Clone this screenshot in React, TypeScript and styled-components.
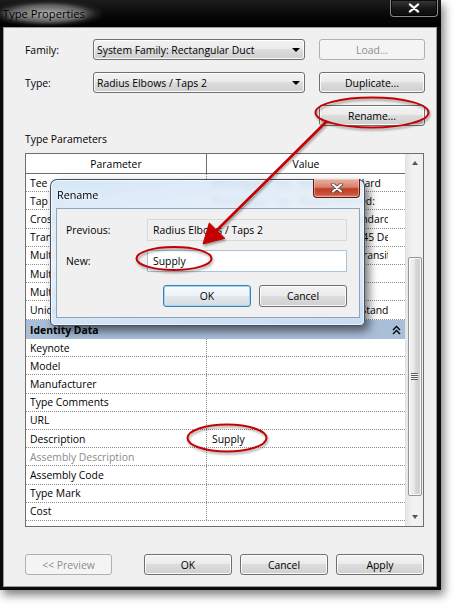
import React from "react";
import styled, { createGlobalStyle, css } from "styled-components";

const FONT = `"Open Sans", "Noto Sans", "Liberation Sans", sans-serif`;

const GlobalStyle = createGlobalStyle`
  html, body { margin: 0; padding: 0; background: #ffffff; }
  body { font-family: ${FONT}; font-size: 10.4px; color: #000; }
  * { box-sizing: border-box; }
`;

const Page = styled.div`
  position: relative;
  width: 457px;
  height: 611px;
  overflow: hidden;
  background: #fff;
`;

const Window = styled.div`
  width: 441px;
  height: 590px;
  display: flex;
  flex-direction: column;
  background: #0a0a0a;
  box-shadow: 3px 5px 9px rgba(0, 0, 0, 0.5);
`;

const TitleBar = styled.div`
  height: 27px;
  flex: none;
  display: flex;
  justify-content: space-between;
  background: linear-gradient(#1c1c1c, #070707 60%, #000);
`;

const TitleText = styled.span`
  align-self: center;
  margin-left: -6px;
  margin-top: -1px;
  padding: 5px 16px 5px 9px;
  font-size: 11.2px;
  color: #000;
  background: radial-gradient(ellipse at center, rgba(175, 175, 175, 0.95) 0%, rgba(125, 125, 125, 0.75) 45%, rgba(60, 60, 60, 0.3) 65%, rgba(0, 0, 0, 0) 78%);
  text-shadow: 0 0 4px rgba(255, 255, 255, 0.45);
`;

const MainClose = styled.div`
  width: 48px;
  height: 17px;
  margin-right: 3px;
  border: 1px solid #8a8a8a;
  border-top: none;
  border-radius: 0 0 4px 4px;
  background: linear-gradient(#3a3a3a, #161616 55%, #0c0c0c);
  box-shadow: inset 0 0 0 1px rgba(0, 0, 0, 0.8);
  display: flex;
  align-items: center;
  justify-content: center;
`;

const Body = styled.div`
  flex: 1;
  margin: 0 4px 3px 3px;
  background: #f0f0f0;
  border: 1px solid #9a9a9a;
  padding: 11px 11px 0 21px;
  display: flex;
  flex-direction: column;
`;

const TopGrid = styled.div`
  display: grid;
  grid-template-columns: 54px 212px 1fr;
  grid-auto-rows: 21px;
  column-gap: 14px;
  row-gap: 12px;
  margin-bottom: 5px;
`;

const Label = styled.span`
  display: flex;
  align-items: center;
`;

const winButton = css`
  border: 1px solid #707070;
  border-radius: 3px;
  background: linear-gradient(#f2f2f2 0%, #ebebeb 49%, #dddddd 50%, #cfcfcf 100%);
  box-shadow: inset 0 0 0 1px rgba(255, 255, 255, 0.85);
`;

const Combo = styled.div`
  ${winButton};
  display: flex;
  align-items: center;
  justify-content: space-between;
  padding: 0 4px 0 3px;
`;

const ComboArrow = styled.span`
  width: 0;
  height: 0;
  border-left: 4px solid transparent;
  border-right: 4px solid transparent;
  border-top: 4px solid #000;
`;

const Button = styled.div<{ $disabled?: boolean; $default?: boolean; $w?: number }>`
  ${winButton};
  display: flex;
  align-items: center;
  justify-content: center;
  height: 21px;
  ${(p) => (p.$w ? `width: ${p.$w}px;` : "")}
  ${(p) =>
    p.$disabled &&
    css`
      border-color: #adb2b5;
      background: #f4f4f4;
      color: #8d8d8d;
      box-shadow: none;
    `}
  ${(p) =>
    p.$default &&
    css`
      border-color: #3c7fb1;
      box-shadow: inset 0 0 0 1px #9fd6f5;
      background: linear-gradient(#f5f9fc 0%, #eef3f7 49%, #e2e8ec 50%, #d6dde2 100%);
    `}
`;

const SpacerCell = styled.span``;

const SectionLabel = styled.div`
  height: 16px;
  line-height: 16px;
  margin-bottom: 6px;
`;

const Table = styled.div`
  height: 374px;
  margin-right: 1px;
  border: 1px solid #6e6e6e;
  background: #fff;
  display: flex;
`;

const GridArea = styled.div`
  flex: 1;
  display: flex;
  flex-direction: column;
  min-width: 0;
`;

const HeaderRow = styled.div`
  height: 20px;
  flex: none;
  display: grid;
  grid-template-columns: 181px 1fr;
  border-bottom: 1px solid #6e6e6e;
`;

const HeaderCell = styled.div<{ $first?: boolean }>`
  display: flex;
  align-items: center;
  justify-content: center;
  ${(p) => p.$first && "border-right: 1px solid #6e6e6e;"}
`;

const Row = styled.div`
  height: 18.2px;
  flex: none;
  display: grid;
  grid-template-columns: 181px 1fr;
  border-bottom: 1px dotted #8c8c8c;
`;

const ParamCell = styled.div<{ $muted?: boolean }>`
  display: flex;
  align-items: center;
  padding-left: 4px;
  border-right: 1px dotted #8c8c8c;
  white-space: nowrap;
  overflow: hidden;
  color: ${(p) => (p.$muted ? "#8b8b8b" : "#000")};
`;

const ValueCell = styled.div`
  display: flex;
  align-items: center;
  padding: 0 17px 0 5px;
  white-space: nowrap;
  overflow: hidden;
`;

const ValueText = styled.span`
  overflow: hidden;
`;

const GroupRow = styled.div`
  height: 19.5px;
  flex: none;
  display: flex;
  align-items: center;
  justify-content: space-between;
  padding: 1px 4px 0 4px;
  background: #a9bfd8;
  font-weight: 700;
`;

const ScrollBar = styled.div`
  width: 18px;
  flex: none;
  display: flex;
  flex-direction: column;
  align-items: center;
  background: linear-gradient(90deg, #e6e6e6, #f3f3f3 40%, #f0f0f0);
  border-left: 1px solid #e2e2e2;
`;

const ScrollBtn = styled.div`
  height: 18px;
  width: 100%;
  flex: none;
  display: flex;
  align-items: center;
  justify-content: center;
`;

const Arrow = styled.span<{ $down?: boolean }>`
  width: 0;
  height: 0;
  border-left: 3.5px solid transparent;
  border-right: 3.5px solid transparent;
  ${(p) => (p.$down ? "border-top: 4px solid #555;" : "border-bottom: 4px solid #555;")}
`;

const Track = styled.div`
  flex: 1;
  width: 100%;
  display: flex;
  justify-content: center;
`;

const Thumb = styled.div`
  margin-top: 85px;
  width: 14px;
  height: 239px;
  border: 1px solid #959595;
  border-radius: 2px;
  background: linear-gradient(90deg, #f3f3f3, #e8e8e8 45%, #d6d6d6 55%, #cfcfcf);
  box-shadow: inset 0 0 0 1px rgba(255, 255, 255, 0.8);
  display: flex;
  align-items: center;
  justify-content: center;
`;

const Grip = styled.span`
  width: 7px;
  height: 7px;
  background: repeating-linear-gradient(#5e5e5e 0 1px, #f6f6f6 1px 2px);
`;

const Footer = styled.div`
  margin-top: 27px;
  margin-right: 1px;
  display: flex;
  justify-content: space-between;
`;

const ButtonGroup = styled.div`
  display: flex;
  gap: 8px;
`;

/* ---------- Rename dialog ---------- */

const Dialog = styled.div`
  position: absolute;
  left: 50px;
  top: 179px;
  width: 315px;
  height: 147px;
  border: 1px solid rgba(40, 55, 75, 0.85);
  border-radius: 7px 7px 5px 5px;
  padding: 0 4px 7px 5px;
  display: flex;
  flex-direction: column;
  background: linear-gradient(170deg, rgba(210, 228, 246, 0.92) 0%, rgba(232, 241, 250, 0.9) 40%, rgba(200, 220, 242, 0.92) 100%);
  backdrop-filter: blur(2.5px);
  box-shadow: inset 0 0 0 1px rgba(255, 255, 255, 0.65), 4px 5px 10px rgba(0, 0, 0, 0.55);
`;

const DialogTitleRow = styled.div`
  height: 28px;
  flex: none;
  display: flex;
  justify-content: space-between;
`;

const DialogTitle = styled.span`
  align-self: center;
  margin-left: 1px;
  font-size: 10.8px;
  text-shadow: 0 0 6px rgba(255, 255, 255, 0.9);
`;

const RedClose = styled.div`
  width: 47px;
  height: 19px;
  margin-top: -1px;
  border: 1px solid #5a1d15;
  border-top: none;
  border-radius: 0 0 4px 4px;
  background: linear-gradient(#eab0a3 0%, #d7826c 45%, #c23c22 55%, #c8533a 85%, #db8d72 100%);
  box-shadow: inset 0 0 0 1px rgba(255, 220, 210, 0.45);
  display: flex;
  align-items: center;
  justify-content: center;
`;

const DialogContent = styled.div`
  flex: 1;
  border: 1px solid #8ea4bb;
  background: #f0f0f0;
  padding: 10px 12px 0 9px;
  display: grid;
  grid-template-columns: 81px 200px;
  grid-template-rows: 22px 22px 22px;
  row-gap: 9px;
`;

const Field = styled.div<{ $disabled?: boolean }>`
  display: flex;
  align-items: center;
  padding-left: 5px;
  border: 1px solid ${(p) => (p.$disabled ? "#d9d9d9" : "#a9c3dd")};
  background: ${(p) => (p.$disabled ? "#f0f0f0" : "#ffffff")};
`;

const DialogButtons = styled.div`
  grid-column: 1 / span 2;
  margin-top: 4px;
  display: flex;
  justify-content: flex-end;
  gap: 8px;
`;

const DialogButton = styled(Button)`
  height: 22px;
  width: 88px;
`;

/* ---------- annotations ---------- */

const Overlay = styled.svg`
  position: absolute;
  left: 0;
  top: 0;
  pointer-events: none;
`;

const XIcon: React.FC<{ size?: number }> = ({ size = 10 }) => (
  <svg width={size + 2} height={size} viewBox="0 0 12 10">
    <path d="M2 1.5 L10 8.5 M10 1.5 L2 8.5" stroke="#3a3a3a" strokeWidth="3.6" strokeLinecap="round" fill="none" />
    <path d="M2 1.5 L10 8.5 M10 1.5 L2 8.5" stroke="#ffffff" strokeWidth="2.2" strokeLinecap="round" fill="none" />
  </svg>
);

const Collapse = () => (
  <svg width="9" height="10" viewBox="0 0 9 10">
    <path d="M1 5 L4.5 1.5 L8 5 M1 9 L4.5 5.5 L8 9" stroke="#000" strokeWidth="1.4" fill="none" />
  </svg>
);

const upperRows: [string, string][] = [
  ["Tee", "Rectangular Tee - Radius: Standard"],
  ["Tap", "Rectangular Tap - Radius Mitered:"],
  ["Cross", "Rectangular Cross - Radius: Standard"],
  ["Transition", "Rectangular Transition - Angle: 45 Degrees"],
  ["Multi Shape Transition Rectangle to Round", "Rectangle to Round - Angled - Transition"],
  ["Multi Shape Transition Rectangle to Oval", ""],
  ["Multi Shape Transition Oval to Round", ""],
  ["Union", "Rectangular Union - Radiused: Standard"],
];

const lowerRows: [string, string, boolean?][] = [
  ["Keynote", ""],
  ["Model", ""],
  ["Manufacturer", ""],
  ["Type Comments", ""],
  ["URL", ""],
  ["Description", "Supply"],
  ["Assembly Description", "", true],
  ["Assembly Code", ""],
  ["Type Mark", ""],
  ["Cost", ""],
];

export default function App() {
  return (
    <Page>
      <GlobalStyle />
      <Window>
        <TitleBar>
          <TitleText>Type Properties</TitleText>
          <MainClose>
            <XIcon />
          </MainClose>
        </TitleBar>
        <Body>
          <TopGrid>
            <Label>Family:</Label>
            <Combo>
              <span>System Family: Rectangular Duct</span>
              <ComboArrow />
            </Combo>
            <Button $disabled>Load...</Button>
            <Label>Type:</Label>
            <Combo>
              <span>Radius Elbows / Taps 2</span>
              <ComboArrow />
            </Combo>
            <Button>Duplicate...</Button>
            <SpacerCell />
            <SpacerCell />
            <Button>Rename...</Button>
          </TopGrid>
          <SectionLabel>Type Parameters</SectionLabel>
          <Table>
            <GridArea>
              <HeaderRow>
                <HeaderCell $first>Parameter</HeaderCell>
                <HeaderCell>Value</HeaderCell>
              </HeaderRow>
              {upperRows.map(([p, v]) => (
                <Row key={p}>
                  <ParamCell>{p}</ParamCell>
                  <ValueCell>
                    <ValueText>{v}</ValueText>
                  </ValueCell>
                </Row>
              ))}
              <GroupRow>
                <span>Identity Data</span>
                <Collapse />
              </GroupRow>
              {lowerRows.map(([p, v, muted]) => (
                <Row key={p}>
                  <ParamCell $muted={muted}>{p}</ParamCell>
                  <ValueCell>
                    <ValueText>{v}</ValueText>
                  </ValueCell>
                </Row>
              ))}
            </GridArea>
            <ScrollBar>
              <ScrollBtn>
                <Arrow />
              </ScrollBtn>
              <Track>
                <Thumb>
                  <Grip />
                </Thumb>
              </Track>
              <ScrollBtn>
                <Arrow $down />
              </ScrollBtn>
            </ScrollBar>
          </Table>
          <Footer>
            <Button $disabled $w={87}>
              &lt;&lt; Preview
            </Button>
            <ButtonGroup>
              <Button $w={88}>OK</Button>
              <Button $w={88}>Cancel</Button>
              <Button $w={88}>Apply</Button>
            </ButtonGroup>
          </Footer>
        </Body>
      </Window>

      <Dialog>
        <DialogTitleRow>
          <DialogTitle>Rename</DialogTitle>
          <RedClose>
            <XIcon />
          </RedClose>
        </DialogTitleRow>
        <DialogContent>
          <Label>Previous:</Label>
          <Field $disabled>Radius Elbows / Taps 2</Field>
          <Label>New:</Label>
          <Field>Supply</Field>
          <DialogButtons>
            <DialogButton $default>OK</DialogButton>
            <DialogButton>Cancel</DialogButton>
          </DialogButtons>
        </DialogContent>
      </Dialog>

      <Overlay width="457" height="611" viewBox="0 0 457 611">
        <g
          fill="none"
          stroke="#c40000"
          strokeWidth="2"
          style={{ filter: "drop-shadow(1px 2px 1.2px rgba(0,0,0,0.35))" }}
        >
          <ellipse cx="372" cy="112.5" rx="56.5" ry="15" />
          <ellipse cx="174" cy="258.5" rx="37.5" ry="11.5" />
          <ellipse cx="227" cy="438" rx="39.5" ry="13.5" />
          <line x1="327" y1="121" x2="214" y2="233" strokeWidth="2.6" />
          <path d="M203 244 L209.3 222.9 L224.8 238.3 Z" fill="#c40000" stroke="#c40000" strokeWidth="1" strokeLinejoin="round" />
        </g>
      </Overlay>
    </Page>
  );
}
